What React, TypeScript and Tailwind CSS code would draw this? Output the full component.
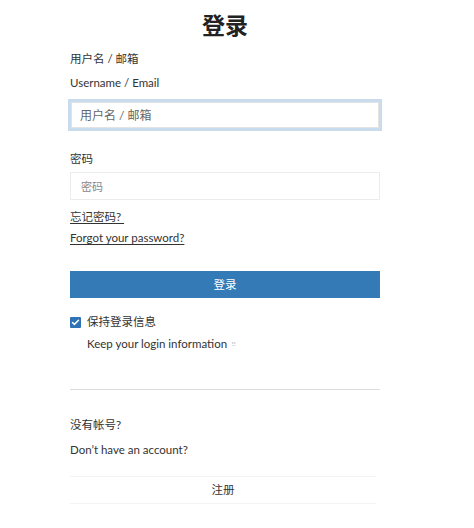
import { Check } from "lucide-react";

const FONT = "font-['Lato','Noto_Sans_CJK_SC',sans-serif]";

export default function App() {
  return (
    <div className={`min-h-[528px] w-[474px] bg-white text-[11.5px] leading-[18px] text-[#333] ${FONT}`}>
      <div className="ml-[70px] w-[310px] pt-[8px]">
        <h1 className="text-center text-[23px] font-bold leading-[34px] text-[#222]">登录</h1>

        <div className="mt-[8px]">用户名 / 邮箱</div>
        <div className="mt-[6px]">Username / Email</div>
        <div className="mt-[7px] -mx-[2px] border-[3px] border-[#c8dcee] bg-white">
          <input
            className="h-[26px] w-full border border-[#e3e3e3] px-[8px] text-[12px] text-[#555] outline-none placeholder:text-[#666]"
            placeholder="用户名 / 邮箱"
          />
        </div>

        <div className="mt-[19px]">密码</div>
        <input
          type="text"
          className="mt-[4px] h-[28px] w-full border border-[#ececec] px-[10px] text-[11px] outline-none placeholder:text-[#888]"
          placeholder="密码"
        />

        <a className="mt-[8px] block text-[#333] underline underline-offset-2">忘记密码?&nbsp;</a>
        <a className="mt-[3px] block text-[#333] underline underline-offset-2">Forgot your password?</a>

        <button className="mt-[24px] h-[27px] w-full bg-[#337ab7] text-[11.5px] text-white">登录</button>

        <label className="mt-[15px] flex items-center gap-[6px]">
          <span className="flex h-[11px] w-[11px] items-center justify-center rounded-[1px] bg-[#2f72b5]">
            <Check className="h-[9px] w-[9px] text-white" strokeWidth={4} />
          </span>
          保持登录信息
        </label>
        <div className="ml-[17px] mt-[4px] flex items-center gap-[4px]">
          Keep your login information
          <span className="text-[7px] leading-none text-[#ccc]">⠿</span>
        </div>

        <hr className="mt-[36px] border-t border-[#ddd]" />

        <div className="mt-[26px]">没有帐号?</div>
        <div className="mt-[7px]">Don’t have an account?</div>
        <button className="mt-[17px] h-[28px] w-[306px] border-y border-[#f3f3f3] text-[11.5px] text-[#333]">注册</button>
      </div>
    </div>
  );
}
